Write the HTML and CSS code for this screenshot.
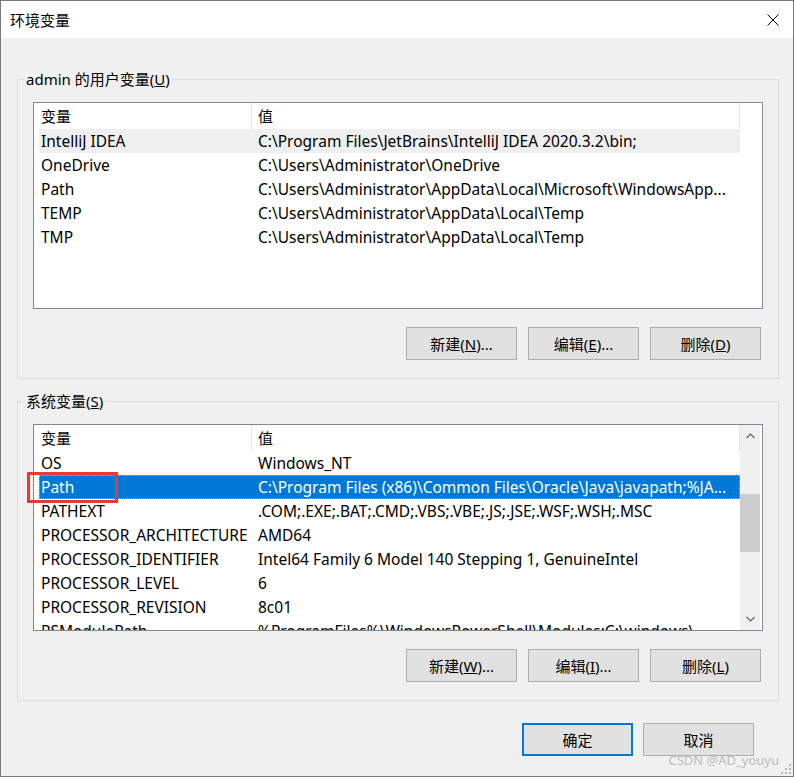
FILE: index.html
```html
<!DOCTYPE html>
<html lang="zh-CN">
<head>
<meta charset="utf-8">
<title>环境变量</title>
<link rel="stylesheet" href="styles.css">
</head>
<body>
<div class="window">
  <div class="titlebar">
    <span class="title">环境变量</span>
    <svg class="close" width="12" height="12" viewBox="0 0 12 12"><path d="M0.5 0.5L11.5 11.5M11.5 0.5L0.5 11.5" stroke="#000" stroke-width="1" fill="none"/></svg>
  </div>
  <div class="content">
    <fieldset class="group">
      <legend>admin 的用户变量(<u>U</u>)</legend>
      <div class="listview">
        <div class="lv-main">
          <div class="lv-head"><div class="c1">变量</div><div class="c2">值</div></div>
          <div class="lv-row hover"><div class="c1">IntelliJ IDEA</div><div class="c2">C:\Program Files\JetBrains\IntelliJ IDEA 2020.3.2\bin;</div></div>
          <div class="lv-row"><div class="c1">OneDrive</div><div class="c2">C:\Users\Administrator\OneDrive</div></div>
          <div class="lv-row"><div class="c1">Path</div><div class="c2">C:\Users\Administrator\AppData\Local\Microsoft\WindowsApp...</div></div>
          <div class="lv-row"><div class="c1">TEMP</div><div class="c2">C:\Users\Administrator\AppData\Local\Temp</div></div>
          <div class="lv-row"><div class="c1">TMP</div><div class="c2">C:\Users\Administrator\AppData\Local\Temp</div></div>
        </div>
      </div>
      <div class="btnrow">
        <button class="btn">新建(<u>N</u>)...</button>
        <button class="btn">编辑(<u>E</u>)...</button>
        <button class="btn">删除(<u>D</u>)</button>
      </div>
    </fieldset>

    <fieldset class="group group2">
      <legend>系统变量(<u>S</u>)</legend>
      <div class="listview">
        <div class="lv-main">
          <div class="lv-head"><div class="c1">变量</div><div class="c2">值</div></div>
          <div class="lv-row"><div class="c1">OS</div><div class="c2">Windows_NT</div></div>
          <div class="lv-row selected"><div class="c1">Path</div><div class="c2">C:\Program Files (x86)\Common Files\Oracle\Java\javapath;%JA...</div></div>
          <div class="lv-row"><div class="c1">PATHEXT</div><div class="c2">.COM;.EXE;.BAT;.CMD;.VBS;.VBE;.JS;.JSE;.WSF;.WSH;.MSC</div></div>
          <div class="lv-row"><div class="c1">PROCESSOR_ARCHITECTURE</div><div class="c2">AMD64</div></div>
          <div class="lv-row"><div class="c1">PROCESSOR_IDENTIFIER</div><div class="c2">Intel64 Family 6 Model 140 Stepping 1, GenuineIntel</div></div>
          <div class="lv-row"><div class="c1">PROCESSOR_LEVEL</div><div class="c2">6</div></div>
          <div class="lv-row"><div class="c1">PROCESSOR_REVISION</div><div class="c2">8c01</div></div>
          <div class="lv-row"><div class="c1">PSModulePath</div><div class="c2">%ProgramFiles%\WindowsPowerShell\Modules;C:\windows\...</div></div>
        </div>
        <div class="scrollbar">
          <div class="sb-arrow"><svg width="9" height="6" viewBox="0 0 9 6"><path d="M0.5 5L4.5 1L8.5 5" stroke="#606060" stroke-width="1.1" fill="none"/></svg></div>
          <div class="sb-track"><div class="sb-thumb"></div></div>
          <div class="sb-arrow"><svg width="9" height="6" viewBox="0 0 9 6"><path d="M0.5 1L4.5 5L8.5 1" stroke="#606060" stroke-width="1.1" fill="none"/></svg></div>
        </div>
      </div>
      <div class="btnrow">
        <button class="btn">新建(<u>W</u>)...</button>
        <button class="btn">编辑(<u>I</u>)...</button>
        <button class="btn">删除(<u>L</u>)</button>
      </div>
    </fieldset>

    <div class="dlg-buttons">
      <button class="btn default">确定</button>
      <button class="btn">取消</button>
    </div>
  </div>

  <div class="annotation"></div>
  <div class="watermark">CSDN @AD_youyu</div>
  <svg class="grip" width="12" height="12" viewBox="0 0 12 12">
    <rect x="9" y="1" width="2" height="2" fill="#b8b8b8"/>
    <rect x="5" y="5" width="2" height="2" fill="#b8b8b8"/>
    <rect x="9" y="5" width="2" height="2" fill="#b8b8b8"/>
    <rect x="1" y="9" width="2" height="2" fill="#b8b8b8"/>
    <rect x="5" y="9" width="2" height="2" fill="#b8b8b8"/>
    <rect x="9" y="9" width="2" height="2" fill="#b8b8b8"/>
  </svg>
</div>
</body>
</html>
```

FILE: styles.css
```css
html, body {
  margin: 0;
  padding: 0;
  background: #f0f0f0;
}

body {
  font-family: "Noto Sans", "Noto Sans CJK SC", sans-serif;
  font-size: 15px;
  color: #000;
}

.window {
  position: relative;
  width: 794px;
  height: 777px;
  box-sizing: border-box;
  border: 1px solid #7a7a7a;
  background: #f0f0f0;
  display: flex;
  flex-direction: column;
  overflow: hidden;
}

.titlebar {
  flex: none;
  height: 37px;
  background: #fff;
  display: flex;
  align-items: center;
  justify-content: space-between;
  padding: 0 14px 0 9px;
}

.title {
  font-size: 15px;
  line-height: 20px;
}

.close {
  display: block;
}

.content {
  padding: 31px 14px 0 16px;
}

.group {
  margin: 0;
  min-width: 0;
  border: 1px solid #dcdcdc;
  padding: 13px 15px 18px 15px;
}

.group2 {
  margin-top: 12px;
}

.group legend {
  padding: 0 2px;
  margin-left: -9px;
  font-size: 15px;
  line-height: 20px;
}

.listview {
  height: 207px;
  box-sizing: border-box;
  border: 1px solid #828790;
  background: #fff;
  display: flex;
  overflow: hidden;
}

.lv-main {
  flex: 1;
  padding-left: 5px;
  overflow: hidden;
  font-size: 15.5px;
}

.lv-head {
  display: flex;
  height: 26px;
  line-height: 26px;
  width: 701px;
  font-size: 15px;
}

.lv-head .c1,
.lv-head .c2 {
  border-right: 1px solid #e5e5e5;
}

.lv-row {
  display: flex;
  height: 24px;
  line-height: 24px;
  width: 701px;
  box-sizing: border-box;
}

.c1,
.c2 {
  box-sizing: border-box;
  white-space: nowrap;
  overflow: hidden;
}

.c1 {
  width: 213px;
  padding-left: 2px;
  flex: none;
}

.c2 {
  width: 488px;
  padding-left: 6px;
  flex: none;
}

.lv-row.hover {
  background: #efefef;
}

.lv-row.selected {
  background: #0078d7;
  color: #fff;
  outline: 1px dotted #e8b070;
  outline-offset: -1px;
}

.scrollbar {
  flex: none;
  width: 20px;
  margin-right: 2px;
  background: #f0f0f0;
  display: flex;
  flex-direction: column;
}

.sb-arrow {
  height: 22px;
  display: flex;
  align-items: center;
  justify-content: center;
  flex: none;
}

.sb-track {
  flex: 1;
}

.sb-thumb {
  margin-top: 47px;
  height: 58px;
  background: #cdcdcd;
}

.btnrow {
  display: flex;
  justify-content: flex-end;
  gap: 11px;
  margin-top: 18px;
  padding-right: 2px;
}

.btn {
  width: 111px;
  height: 33px;
  box-sizing: border-box;
  border: 1px solid #adadad;
  background: #e1e1e1;
  font-family: inherit;
  font-size: 15px;
  color: #000;
  padding: 0;
  margin: 0;
}

.btn.default {
  border: 2px solid #0078d7;
}

.dlg-buttons {
  display: flex;
  justify-content: flex-end;
  gap: 10px;
  margin-top: 22px;
  padding-right: 25px;
}

.annotation {
  position: absolute;
  left: 26px;
  top: 471px;
  width: 91px;
  height: 31px;
  box-sizing: border-box;
  border: 3px solid #e5393b;
}

.watermark {
  position: absolute;
  right: 14px;
  bottom: 8px;
  font-size: 13px;
  line-height: 16px;
  color: #bdbdbd;
}

.grip {
  position: absolute;
  right: 1px;
  bottom: 1px;
}
```
